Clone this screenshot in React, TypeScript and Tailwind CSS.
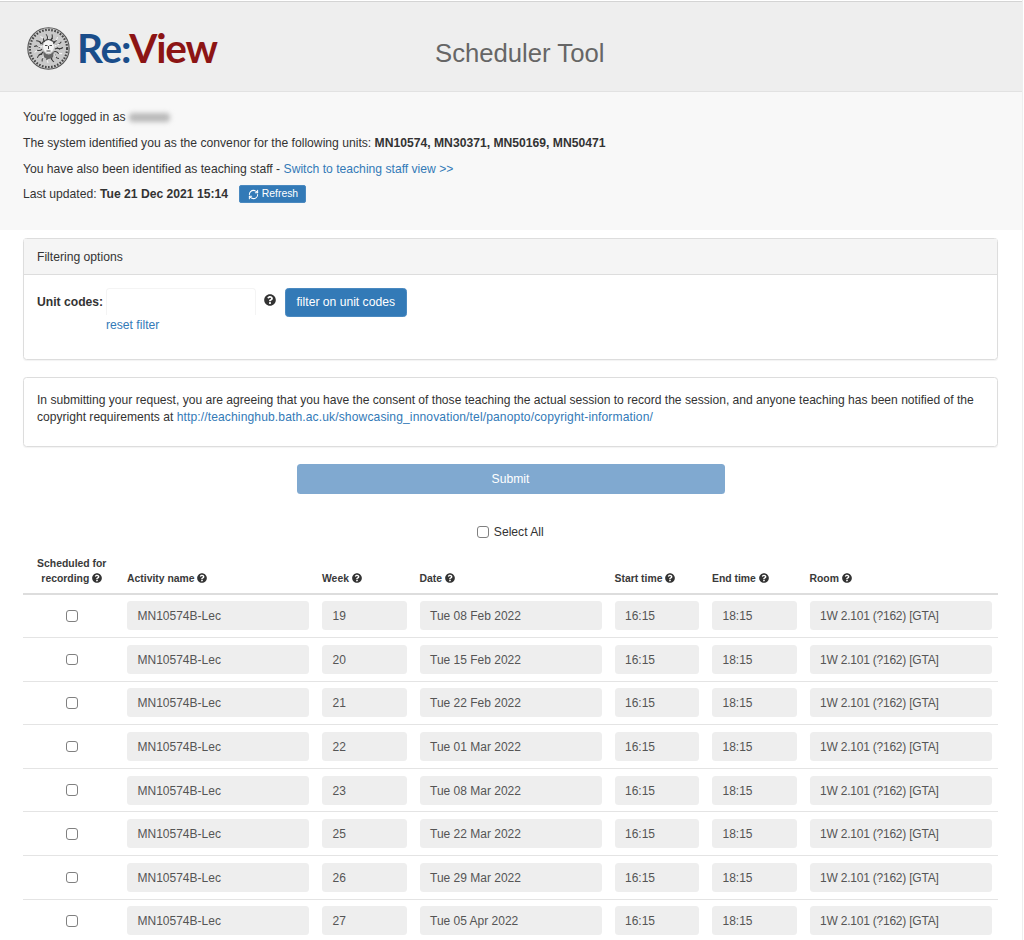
import { FaQuestionCircle } from "react-icons/fa";
import { RefreshCw } from "lucide-react";

const ROWS = [
  { week: "19", date: "Tue 08 Feb 2022" },
  { week: "20", date: "Tue 15 Feb 2022" },
  { week: "21", date: "Tue 22 Feb 2022" },
  { week: "22", date: "Tue 01 Mar 2022" },
  { week: "23", date: "Tue 08 Mar 2022" },
  { week: "25", date: "Tue 22 Mar 2022" },
  { week: "26", date: "Tue 29 Mar 2022" },
  { week: "27", date: "Tue 05 Apr 2022" },
];

function Help({ size = 11 }: { size?: number }) {
  return <FaQuestionCircle size={size} className="inline-block align-[-1px] text-[#333]" />;
}

function Seal() {
  const rays = Array.from({ length: 30 }, (_, i) => i * 12);
  return (
    <svg width="43" height="43" viewBox="0 0 43 43" className="shrink-0">
      <circle cx="21.5" cy="21.5" r="20.7" fill="#c9c9c9" stroke="#555" strokeWidth="1.1" />
      <circle cx="21.5" cy="21.5" r="18.6" fill="none" stroke="#444" strokeWidth="2.2" strokeDasharray="1.6 1.5" />
      {rays.map((r, i) => (
        <path
          key={r}
          d={i % 2 ? "M21.5 13 q2.5 -2.5 0.5 -6" : "M21.5 15 q-2 -2 -0.5 -5"}
          fill="none"
          stroke={i % 3 === 0 ? "#f4f4f4" : "#3a3a3a"}
          strokeWidth="1"
          transform={`rotate(${r} 21.5 21.5)`}
        />
      ))}
      <ellipse cx="21.5" cy="19.5" rx="5.5" ry="6.5" fill="#f3f3f3" />
      <path d="M16 24 q5.5 7 11 0 l-1 6 q-4.5 4 -9 0 z" fill="#666" />
      <path d="M18 18.5 h2.5 M22.5 18.5 h2.5 M21.5 19 v3 M19.5 24 h4" stroke="#333" strokeWidth="0.9" fill="none" />
      <path d="M15 16 q6.5 -7 13 0" stroke="#444" strokeWidth="1.2" fill="none" />
    </svg>
  );
}

function Field({ value, tight }: { value: string; tight?: boolean }) {
  return (
    <div className={`h-[29px] rounded-[3.5px] bg-[#eeeeee] pl-[10.5px] text-[12px] leading-[31px] text-[#555555] ${tight ? "tracking-[-0.22px]" : ""}`}>
      {value}
    </div>
  );
}

function HeadCell({ label, span }: { label: string; span: string }) {
  return (
    <div className={`${span} px-[6.5px]`}>
      {label} <Help size={10} />
    </div>
  );
}

export default function App() {
  return (
    <div className="min-h-[940px] w-[1023px] overflow-hidden border-r border-[#eeeeee] bg-white font-['Liberation_Sans',Arial,sans-serif] text-[12.15px] text-[#333333]">
      {/* banner */}
      <div className="mt-px flex h-[91px] items-center border-t-[1.5px] border-b-[1.5px] border-t-[#d4d4d4] border-b-[#e2e2e2] bg-[#eeeeee] pt-[4px] pl-[27px]">
        <Seal />
        <span className="ml-[7px] w-[140px] font-['Lato',sans-serif] text-[40.5px] leading-none font-bold tracking-[-1.2px] whitespace-nowrap">
          <span className="text-[#1a4d8a]">Re:</span>
          <span className="text-[#8c1414]">View</span>
        </span>
        <h1 className="ml-[218px] pt-[10px] text-[25.7px] leading-none text-[#666666]">Scheduler Tool</h1>
      </div>

      {/* user info */}
      <div className="h-[138px] bg-[#f8f8f8] pt-[16px] pl-[23px]">
        <div className="flex h-[18px] items-center">
          You're logged in as
          <span className="ml-[4px] h-[9px] w-[41px] rounded-sm bg-[#b9b9b9] blur-[2.5px]" />
        </div>
        <div className="mt-[8px] flex h-[18px] items-center whitespace-pre">
          The system identified you as the convenor for the following units:{" "}
          <b>MN10574, MN30371, MN50169, MN50471</b>
        </div>
        <div className="mt-[8px] flex h-[18px] items-center whitespace-pre">
          You have also been identified as teaching staff -{" "}
          <a className="text-[#337ab7]">Switch to teaching staff view &gt;&gt;</a>
        </div>
        <div className="mt-[7px] flex h-[18px] items-center whitespace-pre">
          Last updated: <b>Tue 21 Dec 2021 15:14</b>
          <button className="ml-[11.5px] flex h-[18.5px] w-[67px] items-center justify-center gap-[3px] rounded-[2px] border border-[#4a89c0] bg-[#337ab7] text-[10.4px] text-white">
            <RefreshCw size={11} strokeWidth={2.2} />
            Refresh
          </button>
        </div>
      </div>

      <div className="mx-[23px] mt-[8px] w-[975px]">
        {/* filter panel */}
        <div className="h-[122px] rounded-[3.5px] border border-[#dddddd] shadow-[0_1px_1px_rgba(0,0,0,0.05)]">
          <div className="h-[36px] border-b border-[#dddddd] bg-[#f5f5f5] pl-[13px] leading-[36px]">Filtering options</div>
          <div className="flex pt-[13px] pl-[13px]">
            <b className="mt-[5px] w-[69px] whitespace-nowrap">Unit codes:</b>
            <div className="w-[150px]">
              <div className="h-[27px] rounded-t-[3.5px] border-x border-t border-[#f4f4f4]" />
              <a className="mt-[1px] block leading-[18px] text-[#337ab7]">reset filter</a>
            </div>
            <span className="mt-[4px] ml-[8px] h-[12px]"><Help size={12} /></span>
            <button className="ml-[9px] h-[29px] w-[121.5px] rounded-[3.5px] border border-[#4a89c0] bg-[#337ab7] text-white">
              filter on unit codes
            </button>
          </div>
        </div>

        {/* consent notice */}
        <div className="mt-[17px] h-[70px] rounded-[3.5px] border border-[#dddddd] px-[13px] pt-[14px] text-[12.09px] leading-[17px] shadow-[0_1px_1px_rgba(0,0,0,0.05)]">
          <div className="whitespace-nowrap">
            In submitting your request, you are agreeing that you have the consent of those teaching the actual session to record the session, and anyone teaching has been notified of the
          </div>
          <div className="flex whitespace-pre">
            copyright requirements at{" "}
            <a className="tracking-[0.12px] text-[#337ab7]">http://teachinghub.bath.ac.uk/showcasing_innovation/tel/panopto/copyright-information/</a>
          </div>
        </div>

        <div className="mt-[17px] flex justify-center">
          <button className="h-[29.5px] w-[428px] rounded-[3.5px] bg-[#80a9d0] text-white">Submit</button>
        </div>

        <label className="mt-[29.5px] flex h-[18px] items-center justify-center gap-[5px]">
          <input type="checkbox" className="h-[11.5px] w-[11.5px] appearance-none rounded-[3px] border border-[#808080] bg-white" />
          Select All
        </label>

        {/* sessions table */}
        <div className="mt-[15px] grid grid-cols-10 items-end border-b-2 border-[#dddddd] pb-[6.5px] text-[10.4px] leading-[15px] font-bold text-[#3a3a3a]">
          <div className="px-[6.5px] text-center">
            Scheduled for recording <Help size={10} />
          </div>
          <HeadCell label="Activity name" span="col-span-2" />
          <HeadCell label="Week" span="col-span-1" />
          <HeadCell label="Date" span="col-span-2" />
          <HeadCell label="Start time" span="col-span-1" />
          <HeadCell label="End time" span="col-span-1" />
          <HeadCell label="Room" span="col-span-2" />
        </div>
        {ROWS.map((row) => (
          <div key={row.week} className="grid h-[43.6px] grid-cols-10 items-center border-b border-[#e4e4e4]">
            <div className="flex justify-center">
              <input type="checkbox" className="h-[11.5px] w-[11.5px] appearance-none rounded-[3px] border border-[#808080] bg-white" />
            </div>
            <div className="col-span-2 px-[6.5px]"><Field value="MN10574B-Lec" /></div>
            <div className="px-[6.5px]"><Field value={row.week} /></div>
            <div className="col-span-2 px-[6.5px]"><Field value={row.date} /></div>
            <div className="px-[6.5px]"><Field value="16:15" /></div>
            <div className="px-[6.5px]"><Field value="18:15" /></div>
            <div className="col-span-2 px-[6.5px]"><Field value="1W 2.101 (?162) [GTA]" tight /></div>
          </div>
        ))}
      </div>
    </div>
  );
}
